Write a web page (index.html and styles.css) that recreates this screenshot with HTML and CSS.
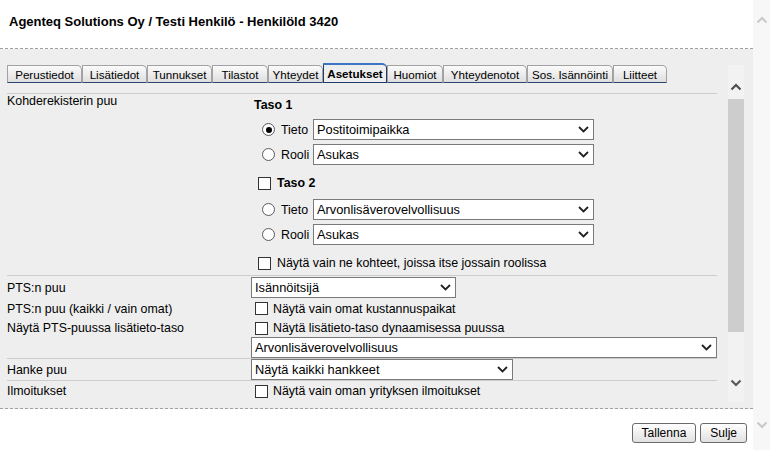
FILE: index.html
```html
<!DOCTYPE html>
<html>
<head>
    <title>Asetukset</title>
    <link rel="stylesheet" href="styles.css">
</head>
<body>
<div class="window">
    <div class="main">
        <div class="header">
            <h1 class="title">Agenteq Solutions Oy / Testi Henkilö - Henkilöld 3420</h1>
        </div>

        <div class="panel">
            <div class="content">
                <ul class="tabs">
                    <li class="tab">Perustiedot</li>
                    <li class="tab">Lisätiedot</li>
                    <li class="tab">Tunnukset</li>
                    <li class="tab">Tilastot</li>
                    <li class="tab">Yhteydet</li>
                    <li class="tab active">Asetukset</li>
                    <li class="tab">Huomiot</li>
                    <li class="tab">Yhteydenotot</li>
                    <li class="tab">Sos. Isännöinti</li>
                    <li class="tab">Liitteet</li>
                </ul>

                <div class="form">
                    <!-- Kohderekisterin puu -->
                    <div class="group tree-group">
                        <div class="label">Kohderekisterin puu</div>
                        <div class="value">
                            <div class="level-title">Taso 1</div>
                            <div class="choice">
                                <input type="radio" name="taso1" checked>
                                <span class="choice-label">Tieto</span>
                                <span class="select taso-select">
                                    <select><option>Postitoimipaikka</option></select>
                                    <svg class="chevron" width="11" height="7" viewBox="0 0 11 7"><path d="M1 1l4.5 4.5L10 1" fill="none" stroke="#222" stroke-width="1.8"/></svg>
                                </span>
                            </div>
                            <div class="choice">
                                <input type="radio" name="taso1">
                                <span class="choice-label">Rooli</span>
                                <span class="select taso-select">
                                    <select><option>Asukas</option></select>
                                    <svg class="chevron" width="11" height="7" viewBox="0 0 11 7"><path d="M1 1l4.5 4.5L10 1" fill="none" stroke="#222" stroke-width="1.8"/></svg>
                                </span>
                            </div>
                            <label class="check level-check">
                                <input type="checkbox">
                                <b>Taso 2</b>
                            </label>
                            <div class="choice first">
                                <input type="radio" name="taso2">
                                <span class="choice-label">Tieto</span>
                                <span class="select taso-select">
                                    <select><option>Arvonlisäverovelvollisuus</option></select>
                                    <svg class="chevron" width="11" height="7" viewBox="0 0 11 7"><path d="M1 1l4.5 4.5L10 1" fill="none" stroke="#222" stroke-width="1.8"/></svg>
                                </span>
                            </div>
                            <div class="choice">
                                <input type="radio" name="taso2">
                                <span class="choice-label">Rooli</span>
                                <span class="select taso-select">
                                    <select><option>Asukas</option></select>
                                    <svg class="chevron" width="11" height="7" viewBox="0 0 11 7"><path d="M1 1l4.5 4.5L10 1" fill="none" stroke="#222" stroke-width="1.8"/></svg>
                                </span>
                            </div>
                            <label class="check role-check">
                                <input type="checkbox">
                                Näytä vain ne kohteet, joissa itse jossain roolissa
                            </label>
                        </div>
                    </div>

                    <!-- PTS -->
                    <div class="group pts-group">
                        <div class="label">PTS:n puu</div>
                        <div class="value">
                            <span class="select pts-select">
                                <select><option>Isännöitsijä</option></select>
                                <svg class="chevron" width="11" height="7" viewBox="0 0 11 7"><path d="M1 1l4.5 4.5L10 1" fill="none" stroke="#222" stroke-width="1.8"/></svg>
                            </span>
                        </div>
                        <div class="label">PTS:n puu (kaikki / vain omat)</div>
                        <div class="value">
                            <label class="check"><input type="checkbox"> Näytä vain omat kustannuspaikat</label>
                        </div>
                        <div class="label">Näytä PTS-puussa lisätieto-taso</div>
                        <div class="value">
                            <label class="check"><input type="checkbox"> Näytä lisätieto-taso dynaamisessa puussa</label>
                        </div>
                        <div class="label"></div>
                        <div class="value">
                            <span class="select wide-select">
                                <select><option>Arvonlisäverovelvollisuus</option></select>
                                <svg class="chevron" width="11" height="7" viewBox="0 0 11 7"><path d="M1 1l4.5 4.5L10 1" fill="none" stroke="#222" stroke-width="1.8"/></svg>
                            </span>
                        </div>
                    </div>

                    <div class="group single-group">
                        <div class="label">Hanke puu</div>
                        <div class="value">
                            <span class="select hanke-select">
                                <select><option>Näytä kaikki hankkeet</option></select>
                                <svg class="chevron" width="11" height="7" viewBox="0 0 11 7"><path d="M1 1l4.5 4.5L10 1" fill="none" stroke="#222" stroke-width="1.8"/></svg>
                            </span>
                        </div>
                    </div>

                    <div class="group last-group">
                        <div class="label">Ilmoitukset</div>
                        <div class="value">
                            <label class="check"><input type="checkbox"> Näytä vain oman yrityksen ilmoitukset</label>
                        </div>
                    </div>
                </div>
            </div>

            <div class="vscroll">
                <svg class="arrow up" width="12" height="8" viewBox="0 0 12 8"><path d="M1.5 6.5L6 2l4.5 4.5" fill="none" stroke="#4d4d4d" stroke-width="2.2"/></svg>
                <div class="thumb"></div>
                <svg class="arrow down" width="12" height="8" viewBox="0 0 12 8"><path d="M1.5 1.5L6 6l4.5-4.5" fill="none" stroke="#5a5a5a" stroke-width="2.2"/></svg>
            </div>
        </div>

        <div class="footer">
            <button class="btn">Tallenna</button>
            <button class="btn">Sulje</button>
        </div>
    </div>

    <div class="page-scroll">
        <svg class="arrow" width="12" height="8" viewBox="0 0 12 8"><path d="M1.5 6.5L6 2l4.5 4.5" fill="none" stroke="#c9c9c9" stroke-width="2"/></svg>
        <svg class="arrow bottom" width="12" height="8" viewBox="0 0 12 8"><path d="M1.5 1.5L6 6l4.5-4.5" fill="none" stroke="#c9c9c9" stroke-width="2"/></svg>
    </div>
</div>
</body>
</html>
```

FILE: styles.css
```css
* {
    box-sizing: border-box;
}
body {
    margin: 0;
    font-family: "Liberation Sans", Arial, sans-serif;
    font-size: 12.4px;
    color: #000;
    background: #fff;
}
.window {
    display: flex;
    height: 450px;
    overflow: hidden;
}
.main {
    width: 753px;
    display: flex;
    flex-direction: column;
}

/* header */
.header {
    height: 49px;
    padding: 15px 0 0 9px;
    border-bottom: 1px dashed #a0a0a0;
}
.title {
    margin: 0;
    font-size: 13px;
    font-weight: bold;
    line-height: 14px;
}

/* grey panel */
.panel {
    height: 360px;
    display: flex;
    background: #eee;
    border-bottom: 1px dashed #a0a0a0;
}
.content {
    width: 728px;
    padding: 14px 11px 0 7px;
}

/* tabs */
.tabs {
    display: flex;
    align-items: flex-end;
    height: 20px;
    margin: 0;
    padding: 0;
    list-style: none;
}
.tab {
    height: 18px;
    padding: 0;
    font-size: 11.6px;
    line-height: 17px;
    text-align: center;
    white-space: nowrap;
    border: 1px solid #a2a2a2;
    border-bottom-color: #2b4570;
    border-top-right-radius: 5px;
    background: linear-gradient(#fbfbfb, #dedede);
}
.tab:nth-child(1) { width: 75px; }
.tab:nth-child(2) { width: 65px; }
.tab:nth-child(3) { width: 65px; }
.tab:nth-child(4) { width: 56px; }
.tab:nth-child(5) { width: 55px; }
.tab:nth-child(6) { width: 64px; }
.tab:nth-child(7) { width: 56px; }
.tab:nth-child(8) { width: 84px; }
.tab:nth-child(9) { width: 86px; }
.tab:nth-child(10) { width: 54px; }
.tab.active {
    height: 20px;
    line-height: 18px;
    font-weight: bold;
    background: #eee;
    border-color: #1f3d6b;
    border-top: 2px solid #3d74c2;
}

/* form */
.form {
    margin-top: 10px;
    border-top: 1px solid #ccc;
}
.group {
    display: grid;
    grid-template-columns: 244px 1fr;
    border-bottom: 1px solid #ccc;
}
.label {
    line-height: 14px;
}
.tree-group .value {
    padding-bottom: 2px;
}
.pts-group {
    grid-template-rows: 21px 21px 18px 21px;
    align-items: center;
    padding-top: 1px;
}
.single-group {
    grid-template-rows: 21px;
    align-items: center;
}
.last-group {
    grid-template-rows: 20px;
    align-items: center;
    border-bottom: none;
}

.level-title {
    height: 20px;
    margin: 1px 0 0 3px;
    line-height: 20px;
    font-weight: bold;
}
.choice {
    display: flex;
    align-items: center;
    height: 21px;
    margin-top: 4px;
}
.choice.first {
    margin-top: 6px;
}
.choice input {
    margin: 0 6px 0 11px;
}
.choice-label {
    width: 32px;
}

.check {
    display: flex;
    align-items: center;
    height: 18px;
}
.check input {
    margin: 0 5px 0 4px;
}
.level-check,
.role-check {
    height: 20px;
    margin-top: 8px;
}
.level-check input,
.role-check input {
    margin: 0 6px 0 7px;
}

/* radio + checkbox */
input[type="radio"],
input[type="checkbox"] {
    appearance: none;
    flex: none;
    width: 13px;
    height: 13px;
    background: #fff;
    border: 1px solid #333;
}
input[type="radio"] {
    border-radius: 50%;
    border-color: #5a5a5a;
    position: relative;
}
input[type="radio"]:checked::after {
    content: "";
    position: absolute;
    left: 2.5px;
    top: 2.5px;
    width: 6px;
    height: 6px;
    border-radius: 50%;
    background: #000;
}

/* selects */
.select {
    position: relative;
    display: inline-block;
    height: 21px;
}
.select select {
    appearance: none;
    width: 100%;
    height: 21px;
    padding: 0 3px;
    font-family: "Liberation Sans", Arial, sans-serif;
    font-size: 12.8px;
    color: #000;
    background: #fff;
    border: 1px solid #7a7a7a;
    border-radius: 0;
}
.select .chevron {
    position: absolute;
    right: 5px;
    top: 7px;
}
.taso-select {
    width: 281px;
}
.pts-select {
    width: 205px;
}
.wide-select {
    width: 100%;
    display: block;
}
.hanke-select {
    width: 262px;
}

/* inner scrollbar */
.vscroll {
    width: 16px;
    height: 337px;
    margin-top: 16px;
    display: flex;
    flex-direction: column;
    align-items: center;
    background: #f2f2f2;
}
.vscroll .up {
    margin-top: 18px;
}
.thumb {
    width: 16px;
    height: 233px;
    margin-top: 8px;
    background: #cdcdcd;
}
.vscroll .down {
    margin-top: 47px;
}

/* footer */
.footer {
    flex: 1;
    display: flex;
    justify-content: flex-end;
    gap: 4px;
    padding: 14px 6px 0 0;
}
.btn {
    height: 20px;
    padding: 0 9px;
    font-family: "Liberation Sans", Arial, sans-serif;
    font-size: 12px;
    color: #000;
    border: 1px solid #6b6b6b;
    border-radius: 3px;
    background: linear-gradient(#fff, #e1e1e1);
}

/* page scrollbar */
.page-scroll {
    width: 17px;
    display: flex;
    flex-direction: column;
    align-items: center;
    background: #f7f7f7;
}
.page-scroll .arrow {
    margin-top: 16px;
}
.page-scroll .bottom {
    margin-top: auto;
    margin-bottom: 21px;
}
```
